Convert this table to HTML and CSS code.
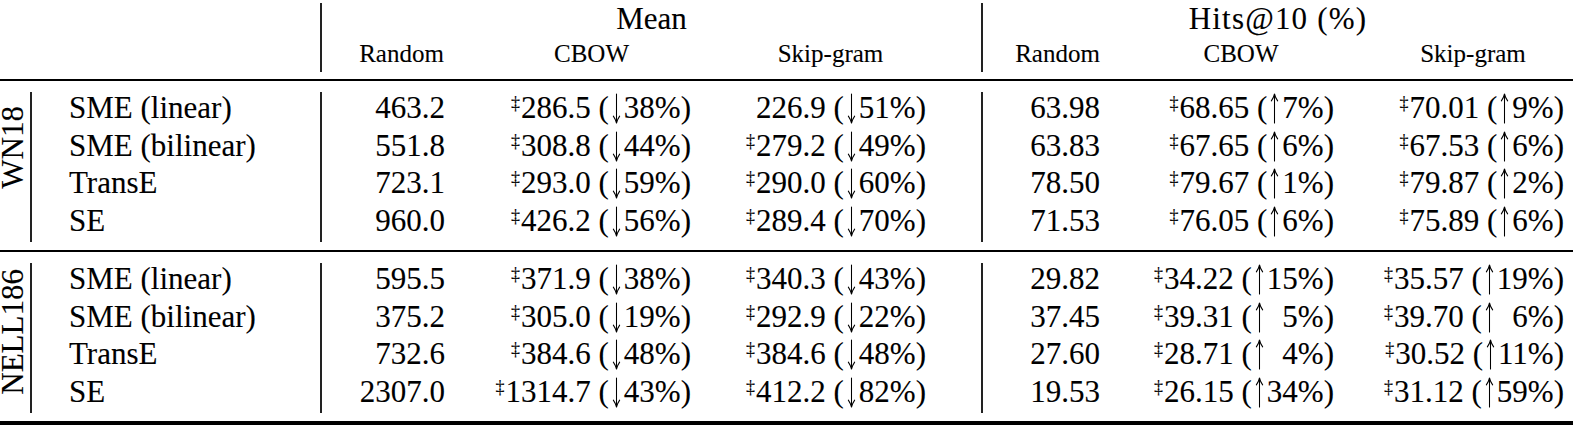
FILE: index.html
```html
<!DOCTYPE html>
<html>
<head>
<meta charset="utf-8">
<link rel="stylesheet" href="styles.css">
</head>
<body>
<svg class="defs" width="0" height="0" aria-hidden="true">
  <symbol id="dn" viewBox="0 0 10 20"><path d="M5 0.3V19.6M2.9 15.1Q4.5 17.4 5 19.8Q5.5 17.4 7.1 15.1"/></symbol>
  <symbol id="up" viewBox="0 0 10 20"><path d="M5 19.7V0.4M2.9 4.9Q4.5 2.6 5 0.2Q5.5 2.6 7.1 4.9"/></symbol>
</svg>
<div class="tbl">
  <div class="block head">
    <div class="corner"></div>
    <div class="grp g-mean">Mean</div>
    <div class="grp g-hits">Hits@10 (%)</div>
    <div class="sub c2">Random</div>
    <div class="sub c3">CBOW</div>
    <div class="sub c4">Skip-gram</div>
    <div class="sub c5">Random</div>
    <div class="sub c6">CBOW</div>
    <div class="sub c7">Skip-gram</div>
  </div>
  <div class="rule top"></div>
  <div class="block body">
    <div class="label l-wn"><span>WN18</span></div>

    <div class="m">SME (linear)</div>
    <div class="d c2">463.2</div>
    <div class="d c3"><span class="dg">‡</span>286.5 (<svg class="ar"><use href="#dn"/></svg>38%)</div>
    <div class="d c4">226.9 (<svg class="ar"><use href="#dn"/></svg>51%)</div>
    <div class="d c5">63.98</div>
    <div class="d c6"><span class="dg">‡</span>68.65 (<svg class="ar"><use href="#up"/></svg>7%)</div>
    <div class="d c7"><span class="dg">‡</span>70.01 (<svg class="ar"><use href="#up"/></svg>9%)</div>

    <div class="m">SME (bilinear)</div>
    <div class="d c2">551.8</div>
    <div class="d c3"><span class="dg">‡</span>308.8 (<svg class="ar"><use href="#dn"/></svg>44%)</div>
    <div class="d c4"><span class="dg">‡</span>279.2 (<svg class="ar"><use href="#dn"/></svg>49%)</div>
    <div class="d c5">63.83</div>
    <div class="d c6"><span class="dg">‡</span>67.65 (<svg class="ar"><use href="#up"/></svg>6%)</div>
    <div class="d c7"><span class="dg">‡</span>67.53 (<svg class="ar"><use href="#up"/></svg>6%)</div>

    <div class="m">TransE</div>
    <div class="d c2">723.1</div>
    <div class="d c3"><span class="dg">‡</span>293.0 (<svg class="ar"><use href="#dn"/></svg>59%)</div>
    <div class="d c4"><span class="dg">‡</span>290.0 (<svg class="ar"><use href="#dn"/></svg>60%)</div>
    <div class="d c5">78.50</div>
    <div class="d c6"><span class="dg">‡</span>79.67 (<svg class="ar"><use href="#up"/></svg>1%)</div>
    <div class="d c7"><span class="dg">‡</span>79.87 (<svg class="ar"><use href="#up"/></svg>2%)</div>

    <div class="m">SE</div>
    <div class="d c2">960.0</div>
    <div class="d c3"><span class="dg">‡</span>426.2 (<svg class="ar"><use href="#dn"/></svg>56%)</div>
    <div class="d c4"><span class="dg">‡</span>289.4 (<svg class="ar"><use href="#dn"/></svg>70%)</div>
    <div class="d c5">71.53</div>
    <div class="d c6"><span class="dg">‡</span>76.05 (<svg class="ar"><use href="#up"/></svg>6%)</div>
    <div class="d c7"><span class="dg">‡</span>75.89 (<svg class="ar"><use href="#up"/></svg>6%)</div>
  </div>
  <div class="rule mid"></div>
  <div class="block body">
    <div class="label l-nell"><span>NELL186</span></div>

    <div class="m">SME (linear)</div>
    <div class="d c2">595.5</div>
    <div class="d c3"><span class="dg">‡</span>371.9 (<svg class="ar"><use href="#dn"/></svg>38%)</div>
    <div class="d c4"><span class="dg">‡</span>340.3 (<svg class="ar"><use href="#dn"/></svg>43%)</div>
    <div class="d c5">29.82</div>
    <div class="d c6"><span class="dg">‡</span>34.22 (<svg class="ar"><use href="#up"/></svg>15%)</div>
    <div class="d c7"><span class="dg">‡</span>35.57 (<svg class="ar"><use href="#up"/></svg>19%)</div>

    <div class="m">SME (bilinear)</div>
    <div class="d c2">375.2</div>
    <div class="d c3"><span class="dg">‡</span>305.0 (<svg class="ar"><use href="#dn"/></svg>19%)</div>
    <div class="d c4"><span class="dg">‡</span>292.9 (<svg class="ar"><use href="#dn"/></svg>22%)</div>
    <div class="d c5">37.45</div>
    <div class="d c6"><span class="dg">‡</span>39.31 (<svg class="ar"><use href="#up"/></svg><span class="ph">0</span>5%)</div>
    <div class="d c7"><span class="dg">‡</span>39.70 (<svg class="ar"><use href="#up"/></svg><span class="ph">0</span>6%)</div>

    <div class="m">TransE</div>
    <div class="d c2">732.6</div>
    <div class="d c3"><span class="dg">‡</span>384.6 (<svg class="ar"><use href="#dn"/></svg>48%)</div>
    <div class="d c4"><span class="dg">‡</span>384.6 (<svg class="ar"><use href="#dn"/></svg>48%)</div>
    <div class="d c5">27.60</div>
    <div class="d c6"><span class="dg">‡</span>28.71 (<svg class="ar"><use href="#up"/></svg><span class="ph">0</span>4%)</div>
    <div class="d c7"><span class="dg">‡</span>30.52 (<svg class="ar"><use href="#up"/></svg>11%)</div>

    <div class="m">SE</div>
    <div class="d c2">2307.0</div>
    <div class="d c3"><span class="dg">‡</span>1314.7 (<svg class="ar"><use href="#dn"/></svg>43%)</div>
    <div class="d c4"><span class="dg">‡</span>412.2 (<svg class="ar"><use href="#dn"/></svg>82%)</div>
    <div class="d c5">19.53</div>
    <div class="d c6"><span class="dg">‡</span>26.15 (<svg class="ar"><use href="#up"/></svg>34%)</div>
    <div class="d c7"><span class="dg">‡</span>31.12 (<svg class="ar"><use href="#up"/></svg>59%)</div>
  </div>
  <div class="rule bot"></div>
</div>
</body>
</html>
```

FILE: styles.css
```css
* { box-sizing: border-box; }

html, body {
  margin: 0;
  padding: 0;
  background: #fff;
}

body {
  color: #000;
  font-family: "Liberation Serif", "Tinos", "Times New Roman", Times, "DejaVu Serif", serif;
  font-size: 31px;
}

.defs {
  position: absolute;
  width: 0;
  height: 0;
  overflow: hidden;
}

.tbl {
  width: 1573px;
  padding-top: 3px;
  -webkit-text-stroke: 0.1px #000;
}

.block {
  display: grid;
  grid-template-columns: 32px 290px 132px 247px 282px 126px 235px 229px;
}

.head {
  grid-template-rows: 31px 38px;
}

.body {
  grid-auto-rows: 37.5px;
}

.corner {
  grid-column: 1 / 3;
  grid-row: 1 / 3;
  border-right: 2px solid #222;
}

.grp {
  grid-row: 1;
  font-size: 31px;
  line-height: 31px;
  text-align: center;
  white-space: nowrap;
}

.g-mean {
  grid-column: 3 / 6;
  border-right: 2px solid #222;
}

.g-hits {
  grid-column: 6 / 9;
  letter-spacing: 1.2px;
}

.sub {
  grid-row: 2;
  font-size: 25px;
  line-height: 36px;
  padding-top: 2px;
  text-align: center;
  white-space: nowrap;
}

.c2 { padding-left: 36px; padding-right: 9px; }
.c3 { padding-left: 38px; padding-right: 10px; }
.c4 { padding-left: 34px; padding-right: 55px; border-right: 2px solid #222; }
.c5 { padding-left: 32px; padding-right: 9px; }
.c6 { padding-left: 39px; padding-right: 10px; }
.c7 { padding-left: 38px; padding-right: 9px; }

.label {
  grid-column: 1;
  grid-row: 1 / span 4;
  border-right: 2px solid #222;
  display: flex;
  align-items: center;
  justify-content: flex-start;
  padding-right: 4px;
}

.label span {
  writing-mode: vertical-rl;
  transform: rotate(180deg);
  line-height: 26px;
  white-space: nowrap;
}

.l-wn { padding-bottom: 40px; }
.l-nell { padding-bottom: 12px; }

.m {
  padding-left: 37px;
  line-height: 31.5px;
  padding-bottom: 6px;
  border-right: 2px solid #222;
  white-space: nowrap;
}

.d {
  line-height: 31.5px;
  padding-bottom: 6px;
  text-align: right;
  white-space: nowrap;
}

.dg {
  font-size: 18px;
  line-height: 0;
  vertical-align: 9px;
  margin-right: 1px;
}

.ar {
  display: inline-block;
  width: 15px;
  height: 31px;
  vertical-align: -6px;
  fill: none;
  stroke: #000;
  stroke-width: 0.7;
  stroke-linecap: round;
}

.ph {
  visibility: hidden;
}

.rule {
  background: #000;
}

.rule.top {
  height: 2px;
  margin-top: 7px;
  margin-bottom: 11px;
}

.rule.mid {
  height: 2px;
  margin-top: 8px;
  margin-bottom: 11px;
}

.rule.bot {
  height: 4px;
  margin-top: 8px;
}
```
